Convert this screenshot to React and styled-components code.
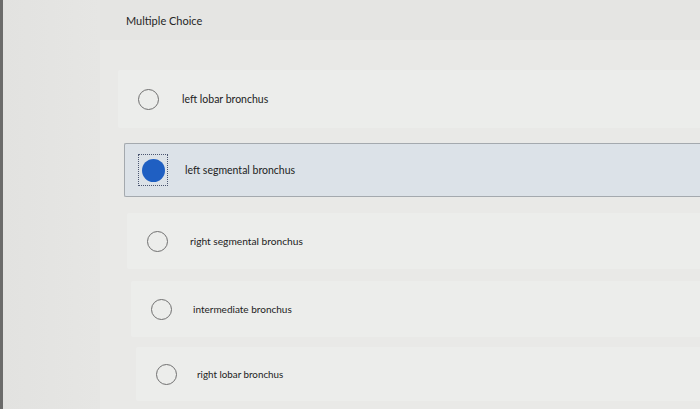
import styled, { createGlobalStyle } from "styled-components";

const GlobalStyle = createGlobalStyle`
  html, body {
    margin: 0;
    padding: 0;
    background: #e6e6e4;
  }
  body {
    font-family: Lato, "Open Sans", sans-serif;
    color: #333;
  }
`;

const Screen = styled.div`
  display: flex;
  width: 700px;
  height: 409px;
  overflow: hidden;
  border-left: 3px solid #6b6b6a;
  box-sizing: border-box;
`;

const Sidebar = styled.div`
  width: 97px;
  flex-shrink: 0;
  background: linear-gradient(90deg, #e2e2e0 0%, #e6e6e4 100%);
`;

const Main = styled.div`
  flex: 1;
  display: flex;
  flex-direction: column;
  background: #e9e9e7;
`;

const Header = styled.div`
  height: 40px;
  box-sizing: border-box;
  padding: 14px 0 0 26px;
  font-size: 11px;
  color: #262626;
  background: #e5e5e3;
`;

const OptionList = styled.div`
  display: flex;
  flex-direction: column;
`;

const Row = styled.div`
  display: flex;
  align-items: center;
  gap: ${(p) => p.$space}px;
  height: ${(p) => p.$height}px;
  margin-top: ${(p) => p.$gap}px;
  margin-left: ${(p) => p.$left}px;
  padding-left: ${(p) => (p.$selected ? 17 : 19)}px;
  box-sizing: border-box;
  background: ${(p) => (p.$selected ? "#dce2e8" : "#ecedeb")};
  border: ${(p) => (p.$selected ? "1px solid #a4a9ae" : "1px solid transparent")};
  border-right: none;
  border-radius: 2px 0 0 2px;
`;

const FocusBox = styled.span`
  display: flex;
  align-items: center;
  justify-content: center;
  width: 30px;
  height: 32px;
  margin-left: -4px;
  margin-right: -6px;
  box-sizing: border-box;
  border: 1.5px dotted #4a5570;
`;

const Radio = styled.span`
  display: block;
  width: ${(p) => (p.$checked ? 23 : 21)}px;
  height: ${(p) => (p.$checked ? 23 : 21)}px;
  border-radius: 50%;
  box-sizing: border-box;
  border: ${(p) => (p.$checked ? "none" : "1.5px solid #707070")};
  background: ${(p) => (p.$checked ? "#1f5fc2" : "transparent")};
`;

const Label = styled.span`
  font-size: ${(p) => p.$size}px;
  color: #222;
`;

const options = [
  { label: "left lobar bronchus", gap: 30, height: 58, left: 18, space: 23, size: 10.5 },
  { label: "left segmental bronchus", gap: 15, height: 54, left: 24, space: 23, size: 10.5, selected: true },
  { label: "right segmental bronchus", gap: 16, height: 56, left: 27, space: 22, size: 10.2 },
  { label: "intermediate bronchus", gap: 12, height: 56, left: 31, space: 21, size: 10 },
  { label: "right lobar bronchus", gap: 10, height: 54, left: 36, space: 20, size: 9.8 },
];

export default function App() {
  return (
    <>
      <GlobalStyle />
      <Screen>
        <Sidebar />
        <Main>
          <Header>Multiple Choice</Header>
          <OptionList>
            {options.map((o) => (
              <Row
                key={o.label}
                $gap={o.gap}
                $height={o.height}
                $left={o.left}
                $space={o.space}
                $selected={o.selected}
              >
                {o.selected ? (
                  <FocusBox>
                    <Radio $checked />
                  </FocusBox>
                ) : (
                  <Radio />
                )}
                <Label $size={o.size}>{o.label}</Label>
              </Row>
            ))}
          </OptionList>
        </Main>
      </Screen>
    </>
  );
}
